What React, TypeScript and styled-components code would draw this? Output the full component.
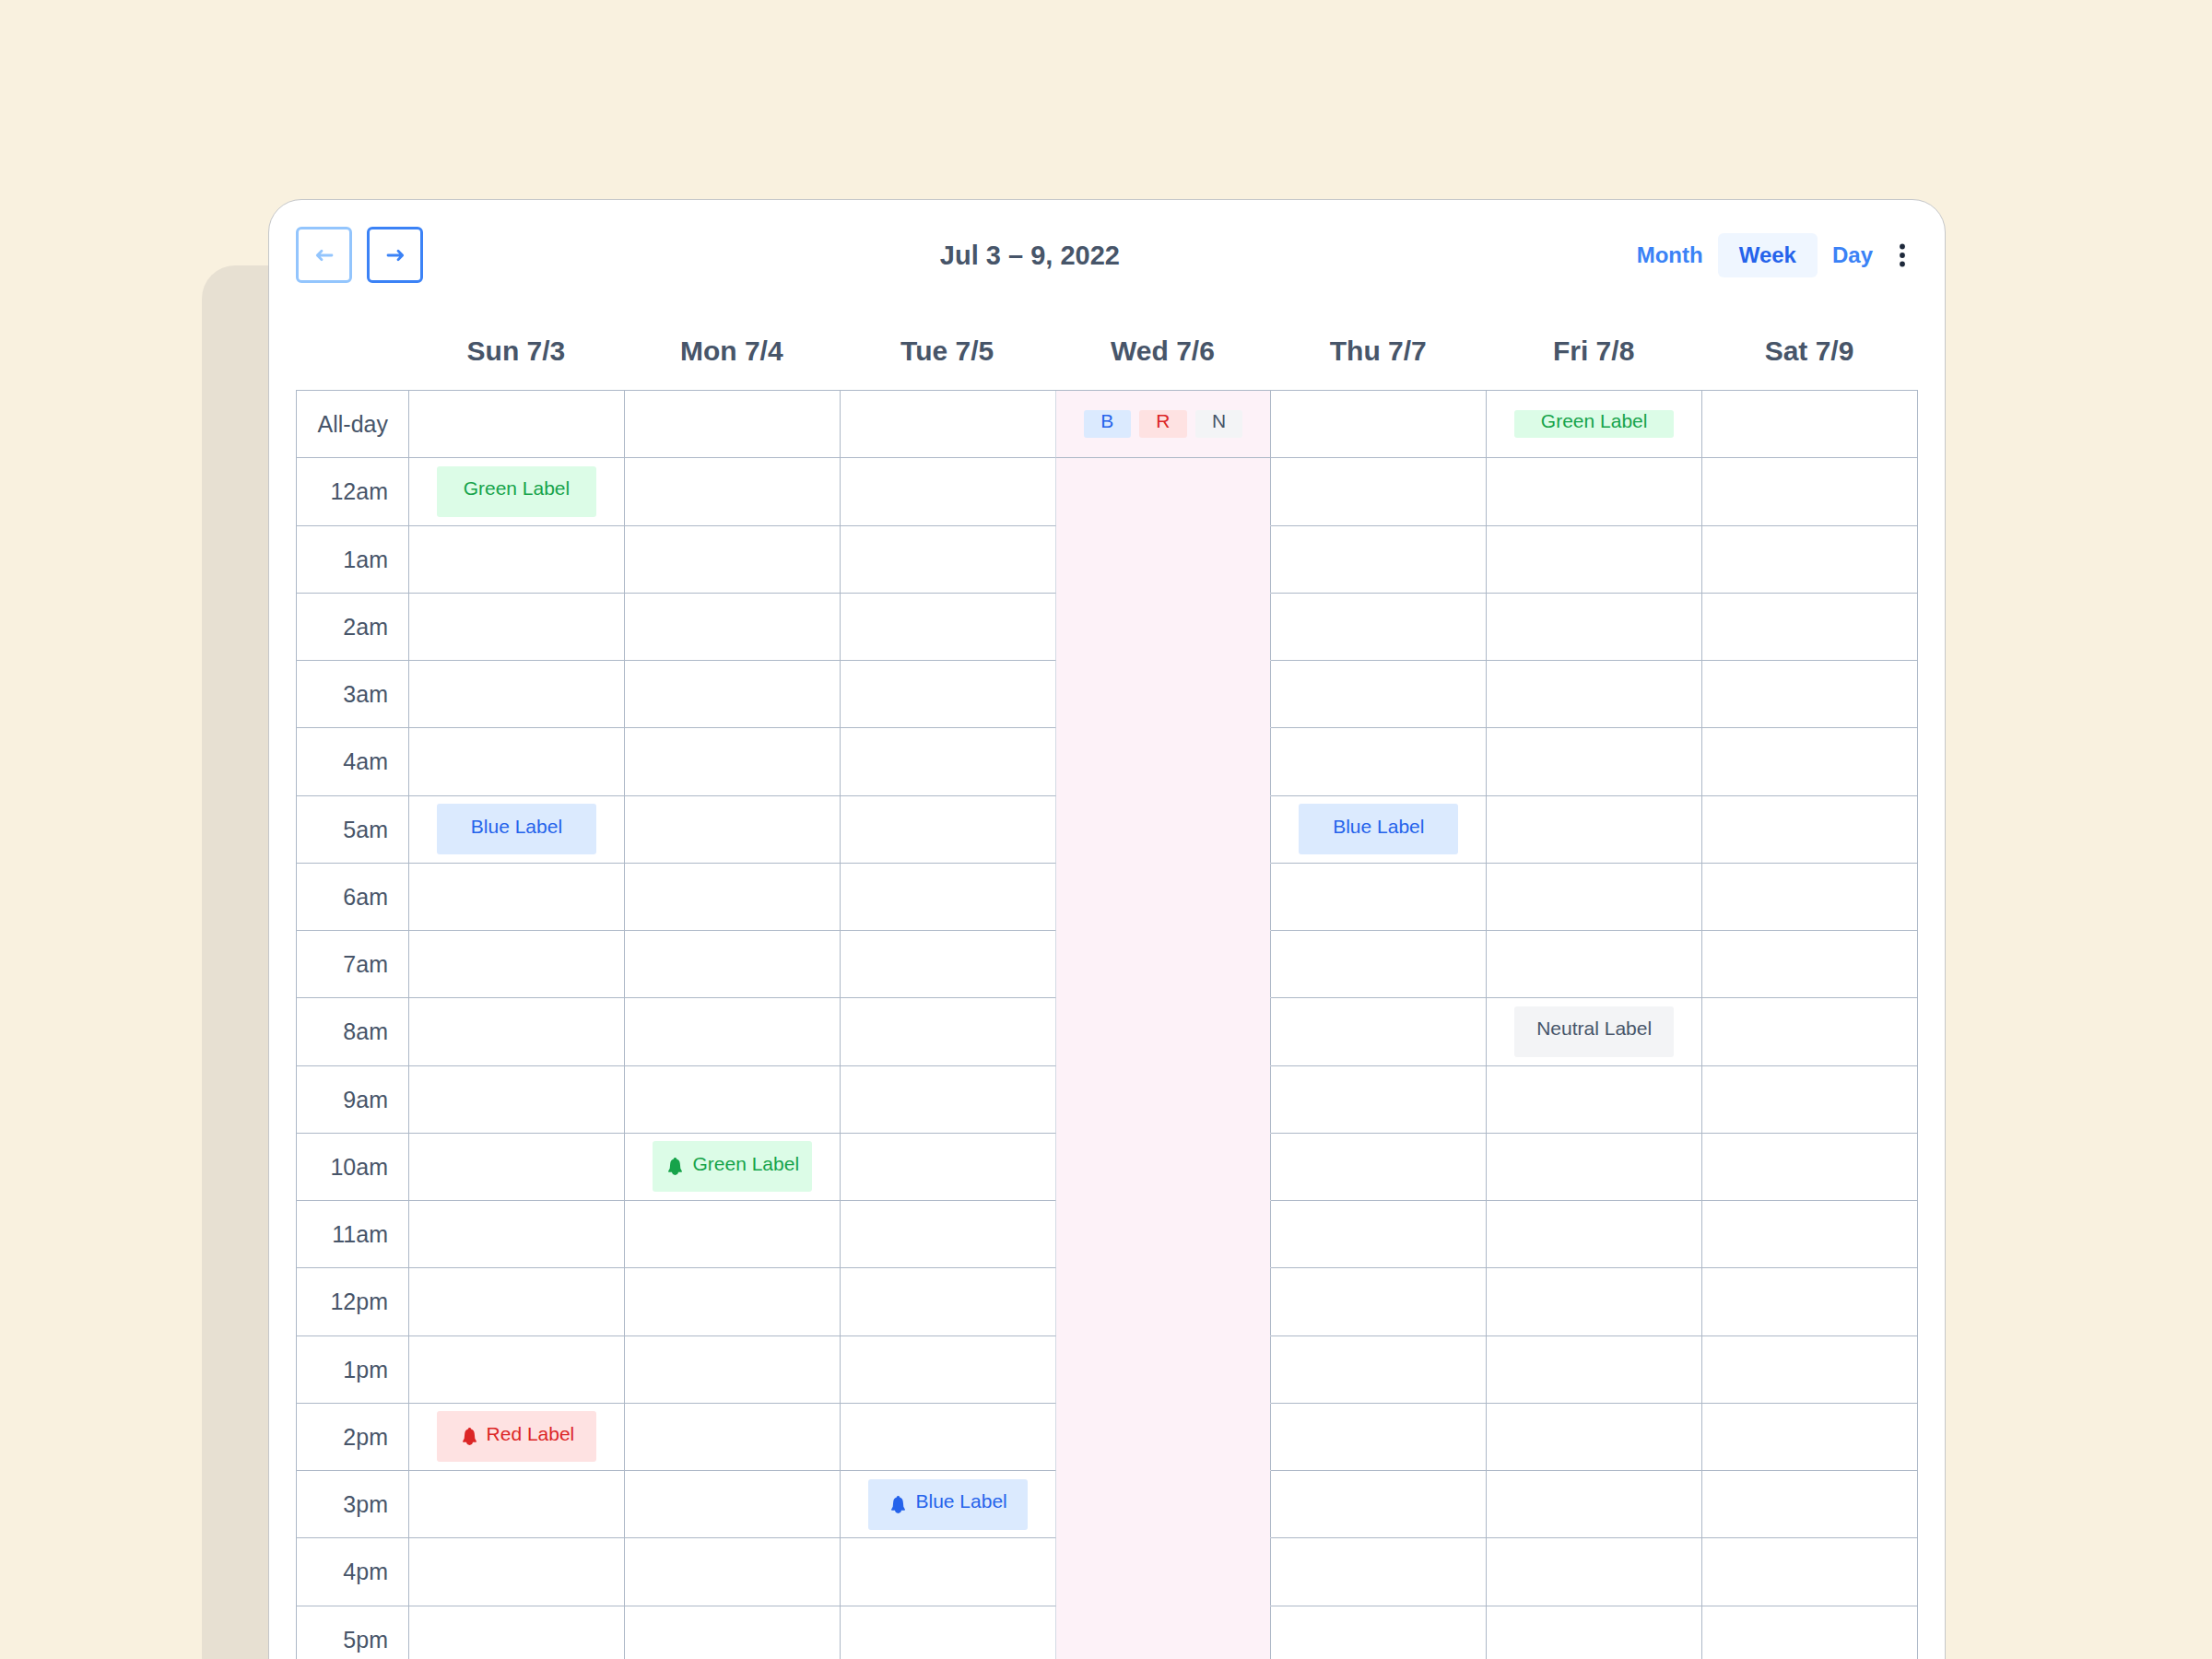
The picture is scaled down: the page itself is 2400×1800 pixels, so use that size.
import React from "react";
import styled, { createGlobalStyle, css } from "styled-components";

const GlobalStyle = createGlobalStyle`
  *, *::before, *::after { box-sizing: border-box; }
  body {
    margin: 0;
    background: #f9f1df;
    color: #475569;
    font-family: "Liberation Sans", Arial, sans-serif;
  }
`;

type Tone = "green" | "blue" | "red" | "neutral";

const tones: Record<Tone, { text: string; fill: string }> = {
  green: { text: "#16a34a", fill: "#dcfce7" },
  blue: { text: "#2563eb", fill: "#dbeafe" },
  red: { text: "#dc2626", fill: "#fee2e2" },
  neutral: { text: "#475569", fill: "#f3f4f6" },
};

const line = "#adb8c7";
const softLine = "#d3dae4";

const Stage = styled.div`
  height: 100vh;
  overflow: hidden;
  padding: 216px 289px 0 291px;
`;

const Card = styled.main`
  padding: 29px;
  background: #fff;
  border: 1px solid #c5c7ca;
  border-radius: 36px;
  box-shadow: -72px 72px 0 #e7e0d2;
`;

const Toolbar = styled.header`
  display: flex;
  align-items: center;
  justify-content: space-between;
  margin-bottom: 31px;
`;

const Group = styled.div`
  display: flex;
  align-items: center;
  gap: 16px;
`;

const NavButton = styled.button`
  display: grid;
  place-items: center;
  width: 61px;
  height: 61px;
  padding: 0;
  border: 3px solid currentColor;
  border-radius: 6px;
  background: #fff;
  color: #3b82f6;
  cursor: pointer;

  &:disabled {
    color: #93c5fd;
    cursor: default;
  }
`;

const Title = styled.h1`
  margin: 0;
  font-size: 29px;
  line-height: 36px;
  font-weight: 600;
`;

const ViewButton = styled.button<{ $active?: boolean }>`
  height: 48px;
  padding: ${(p) => (p.$active ? "0 23px" : "0")};
  border: 0;
  border-radius: 6px;
  background: ${(p) => (p.$active ? "#eff6ff" : "transparent")};
  color: ${(p) => (p.$active ? "#2563eb" : "#3b82f6")};
  font: 600 24px/32px "Liberation Sans", Arial, sans-serif;
  cursor: pointer;
`;

const MenuButton = styled.button`
  display: grid;
  place-items: center;
  width: 33px;
  height: 48px;
  padding: 0;
  border: 0;
  background: transparent;
  color: #1e293b;
  cursor: pointer;
`;

const Week = styled.table`
  width: 100%;
  height: 1478px;
  table-layout: fixed;
  border-collapse: separate;
  border-spacing: 0;
`;

const HourColumn = styled.col`
  width: 123px;
`;

const DayHeading = styled.th`
  height: 86px;
  padding: 0 2px 0 0;
  border-bottom: 1px solid ${line};
  font-size: 30px;
  line-height: 36px;
  font-weight: 600;
`;

const HourRow = styled.tr`
  height: 73px;
`;

const HourHeading = styled.th`
  padding: 0 22px 0 0;
  border: solid ${line};
  border-width: 0 1px 1px 1px;
  font-size: 25px;
  line-height: 32px;
  font-weight: 400;
  text-align: right;
`;

const Slot = styled.td<{ $today: boolean; $beforeToday: boolean; $allDay: boolean }>`
  padding: 0 30px;
  border: solid ${line};
  border-width: 0 1px 1px 0;
  ${(p) => p.$beforeToday && css`border-right-color: ${softLine};`}
  ${(p) => p.$today && css`background: #fdf2f8;`}
  ${(p) => p.$today && !p.$allDay && css`border-bottom-color: transparent;`}
`;

const Events = styled.div`
  display: flex;
  gap: 9px;
`;

const Event = styled.div<{ $tone: Tone; $allDay: boolean; $alert?: boolean }>`
  flex: 1;
  display: flex;
  align-items: center;
  justify-content: center;
  gap: 11px;
  height: ${(p) => (p.$allDay ? "30px" : "55px")};
  padding-left: ${(p) => (p.$alert ? "4px" : "0")};
  border-radius: 3px;
  background: ${(p) => tones[p.$tone].fill};
  color: ${(p) => tones[p.$tone].text};
  font-size: 21px;
  line-height: 24px;
  white-space: nowrap;
`;

const EventName = styled.span`
  padding-bottom: 6px;
`;

const LeftArrow = () => (
  <svg width="20" height="14" viewBox="0 0 20 14" fill="none" stroke="currentColor" strokeWidth="2.8" strokeLinecap="round" strokeLinejoin="round" aria-hidden="true">
    <path d="M18 7H3M7 2.3 2.3 7 7 11.7" />
  </svg>
);

const RightArrow = () => (
  <svg width="20" height="14" viewBox="0 0 20 14" fill="none" stroke="currentColor" strokeWidth="2.8" strokeLinecap="round" strokeLinejoin="round" aria-hidden="true">
    <path d="M2 7h15M13 2.3 17.7 7 13 11.7" />
  </svg>
);

const Dots = () => (
  <svg width="6" height="26" viewBox="0 0 6 26" fill="currentColor" aria-hidden="true">
    <circle cx="3" cy="3.5" r="2.9" />
    <circle cx="3" cy="13" r="2.9" />
    <circle cx="3" cy="22.5" r="2.9" />
  </svg>
);

const Bell = () => (
  <svg width="15" height="19" viewBox="0 0 15 19" fill="currentColor" aria-hidden="true">
    <path d="M7.5 0c.9 0 1.5.6 1.6 1.4 2.300.6 3.500 2.600 3.700 5.100l.5 5.300 1.500 2.700c.4.700.1 1.300-.6 1.300h-3.200c-.2 1.800-1.600 3.100-3.500 3.100s-3.300-1.300-3.500-3.100H.8c-.7 0-1-.6-.6-1.300l1.500-2.700.5-5.300c.2-2.500 1.400-4.500 3.700-5.100C6 .6 6.600 0 7.500 0z" />
  </svg>
);

interface CalendarEvent {
  row: string;
  day: number;
  name: string;
  tone: Tone;
  alert?: boolean;
}

const days = ["Sun 7/3", "Mon 7/4", "Tue 7/5", "Wed 7/6", "Thu 7/7", "Fri 7/8", "Sat 7/9"];
const today = 3;

const rows = [
  "All-day", "12am", "1am", "2am", "3am", "4am", "5am", "6am", "7am", "8am",
  "9am", "10am", "11am", "12pm", "1pm", "2pm", "3pm", "4pm", "5pm",
];

const events: CalendarEvent[] = [
  { row: "All-day", day: 3, name: "B", tone: "blue" },
  { row: "All-day", day: 3, name: "R", tone: "red" },
  { row: "All-day", day: 3, name: "N", tone: "neutral" },
  { row: "All-day", day: 5, name: "Green Label", tone: "green" },
  { row: "12am", day: 0, name: "Green Label", tone: "green" },
  { row: "5am", day: 0, name: "Blue Label", tone: "blue" },
  { row: "5am", day: 4, name: "Blue Label", tone: "blue" },
  { row: "8am", day: 5, name: "Neutral Label", tone: "neutral" },
  { row: "10am", day: 1, name: "Green Label", tone: "green", alert: true },
  { row: "2pm", day: 0, name: "Red Label", tone: "red", alert: true },
  { row: "3pm", day: 2, name: "Blue Label", tone: "blue", alert: true },
];

function DaySlot({ row, day }: { row: string; day: number }) {
  const allDay = row === "All-day";
  const found = events.filter((e) => e.row === row && e.day === day);
  return (
    <Slot $today={day === today} $beforeToday={day === today - 1} $allDay={allDay}>
      {found.length > 0 && (
        <Events>
          {found.map((e) => (
            <Event key={e.name} $tone={e.tone} $allDay={allDay} $alert={e.alert}>
              {e.alert && <Bell />}
              <EventName>{e.name}</EventName>
            </Event>
          ))}
        </Events>
      )}
    </Slot>
  );
}

export default function App() {
  return (
    <>
      <GlobalStyle />
      <Stage>
        <Card>
          <Toolbar>
            <Group>
              <NavButton type="button" aria-label="Previous week" disabled>
                <LeftArrow />
              </NavButton>
              <NavButton type="button" aria-label="Next week">
                <RightArrow />
              </NavButton>
            </Group>
            <Title>Jul 3 – 9, 2022</Title>
            <Group>
              <ViewButton type="button">Month</ViewButton>
              <ViewButton type="button" $active aria-pressed="true">Week</ViewButton>
              <ViewButton type="button">Day</ViewButton>
              <MenuButton type="button" aria-label="More options">
                <Dots />
              </MenuButton>
            </Group>
          </Toolbar>
          <Week>
            <colgroup>
              <HourColumn />
              <col span={7} />
            </colgroup>
            <thead>
              <tr>
                <DayHeading as="td" />
                {days.map((d) => (
                  <DayHeading key={d} scope="col">{d}</DayHeading>
                ))}
              </tr>
            </thead>
            <tbody>
              {rows.map((row) => (
                <HourRow key={row}>
                  <HourHeading scope="row">{row}</HourHeading>
                  {days.map((d, i) => (
                    <DaySlot key={d} row={row} day={i} />
                  ))}
                </HourRow>
              ))}
            </tbody>
          </Week>
        </Card>
      </Stage>
    </>
  );
}
